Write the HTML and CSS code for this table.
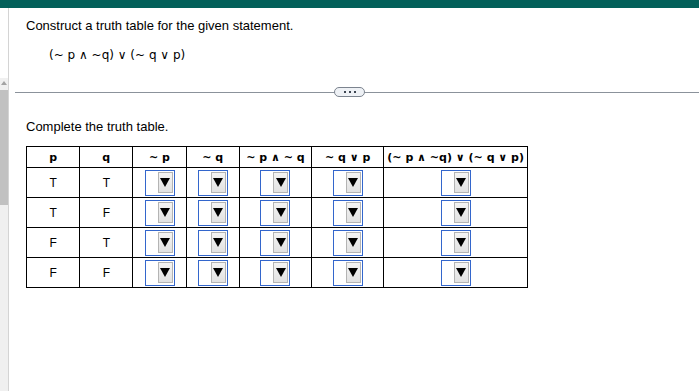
FILE: index.html
```html
<!DOCTYPE html>
<html lang="en">
<head>
<meta charset="utf-8">
<title>Truth table</title>
<link rel="stylesheet" href="styles.css">
</head>
<body>
<div class="topbar"></div>
<div class="frame">
  <aside class="side">
    <div class="side-top"></div>
    <div class="scroll">
      <div class="scroll-arrow"></div>
      <div class="scroll-thumb"></div>
    </div>
  </aside>
  <main class="content">
    <section class="question">
      <p class="prompt">Construct a truth table for the given statement.</p>
      <p class="formula">(~ p &and; ~q) &or; (~ q &or; p)</p>
    </section>
    <div class="divider">
      <span class="more"><i></i><i></i><i></i></span>
    </div>
    <section class="answer">
      <p class="prompt">Complete the truth table.</p>
      <table class="truth">
        <colgroup>
          <col class="c-var"><col class="c-var"><col class="c-var"><col class="c-var">
          <col class="c-mid"><col class="c-mid"><col class="c-wide">
        </colgroup>
        <thead>
          <tr>
            <th>p</th><th>q</th><th>~ p</th><th>~ q</th>
            <th>~ p &and; ~ q</th><th>~ q &or; p</th><th>(~ p &and; ~q) &or; (~ q &or; p)</th>
          </tr>
        </thead>
        <tbody>
          <tr>
            <td>T</td><td>T</td>
            <td><span class="pick"><span class="btn"></span></span></td>
            <td><span class="pick"><span class="btn"></span></span></td>
            <td><span class="pick"><span class="btn"></span></span></td>
            <td><span class="pick"><span class="btn"></span></span></td>
            <td><span class="pick"><span class="btn"></span></span></td>
          </tr>
          <tr>
            <td>T</td><td>F</td>
            <td><span class="pick"><span class="btn"></span></span></td>
            <td><span class="pick"><span class="btn"></span></span></td>
            <td><span class="pick"><span class="btn"></span></span></td>
            <td><span class="pick"><span class="btn"></span></span></td>
            <td><span class="pick"><span class="btn"></span></span></td>
          </tr>
          <tr>
            <td>F</td><td>T</td>
            <td><span class="pick"><span class="btn"></span></span></td>
            <td><span class="pick"><span class="btn"></span></span></td>
            <td><span class="pick"><span class="btn"></span></span></td>
            <td><span class="pick"><span class="btn"></span></span></td>
            <td><span class="pick"><span class="btn"></span></span></td>
          </tr>
          <tr>
            <td>F</td><td>F</td>
            <td><span class="pick"><span class="btn"></span></span></td>
            <td><span class="pick"><span class="btn"></span></span></td>
            <td><span class="pick"><span class="btn"></span></span></td>
            <td><span class="pick"><span class="btn"></span></span></td>
            <td><span class="pick"><span class="btn"></span></span></td>
          </tr>
        </tbody>
      </table>
    </section>
  </main>
</div>
</body>
</html>
```
FILE: styles.css
```css
html, body {
  margin: 0;
  padding: 0;
  background: #fff;
  height: 100%;
  overflow: hidden;
}

body {
  font-family: "Liberation Sans", Arial, sans-serif;
  color: #000;
}

.topbar {
  height: 8px;
  background: #03605a;
}

.frame {
  display: flex;
  height: calc(100% - 8px);
}

/* left rail with its scrollbar */
.side {
  width: 8px;
  flex: none;
  border-right: 1px solid #d4d4d4;
  display: flex;
  flex-direction: column;
}

.side-top {
  height: 70px;
  background: #fff;
}

.scroll {
  flex: 1;
  background: #f0f0f0;
  display: flex;
  flex-direction: column;
}

.scroll-arrow {
  height: 12px;
  position: relative;
}

.scroll-arrow::before {
  content: "";
  position: absolute;
  left: 1px;
  top: 3px;
  border-left: 3px solid transparent;
  border-right: 3px solid transparent;
  border-bottom: 4px solid #a3a3a3;
}

.scroll-thumb {
  height: 115px;
  background: #c1c1c1;
}

.content {
  flex: 1;
  padding-left: 6px;
}

.prompt {
  margin: 0;
  padding-left: 11px;
  font-size: 13px;
  line-height: 15px;
}

.question {
  padding-top: 10px;
}

.formula {
  margin: 15px 0 0;
  padding-left: 34px;
  font-family: "DejaVu Sans", Verdana, sans-serif;
  font-size: 12px;
  line-height: 14px;
}

.divider {
  margin-top: 30px;
  height: 1px;
  background: #8b929b;
  position: relative;
}

.more {
  position: absolute;
  left: 319px;
  top: -5px;
  width: 29px;
  height: 8px;
  border: 1px solid #7c848f;
  border-radius: 5px;
  background: #eef1f5;
  display: flex;
  justify-content: center;
  align-items: center;
  gap: 3px;
}

.more i {
  width: 2px;
  height: 2px;
  background: #3d4652;
}

.answer {
  padding-top: 26px;
}

.truth {
  margin-left: 11px;
  margin-top: 12px;
  border-collapse: collapse;
  table-layout: fixed;
  width: 502px;
}

.c-var { width: 53px; }
.c-mid { width: 72px; }
.c-wide { width: 143px; }

.truth th,
.truth td {
  border: 1px solid #000;
  padding: 0;
  text-align: center;
  vertical-align: middle;
}

.truth th {
  height: 20px;
  font-family: "DejaVu Sans", Verdana, sans-serif;
  font-size: 11px;
  font-weight: bold;
  white-space: nowrap;
}

.truth td {
  height: 29px;
  font-size: 12px;
}

/* drop-down answer box */
.pick {
  display: inline-flex;
  justify-content: flex-end;
  align-items: center;
  box-sizing: border-box;
  width: 30px;
  height: 26px;
  border: 1px solid #3366cc;
  padding-right: 1px;
  vertical-align: middle;
  background: #fff;
}

.btn {
  box-sizing: border-box;
  width: 15px;
  height: 21px;
  border: 1px solid #b4b4b4;
  background: linear-gradient(#f4f4f4, #e2e2e2);
  display: flex;
  justify-content: center;
  align-items: center;
}

.btn::before {
  content: "";
  border-left: 5px solid transparent;
  border-right: 5px solid transparent;
  border-top: 9px solid #000;
}
```
